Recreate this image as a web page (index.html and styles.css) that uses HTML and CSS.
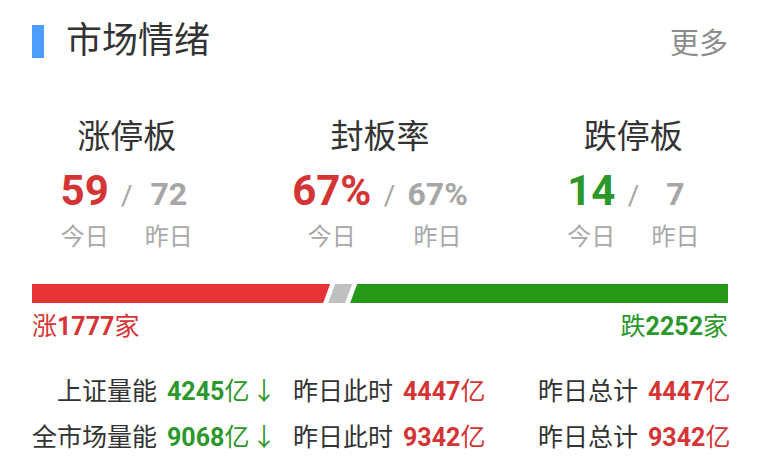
FILE: index.html
```html
<!DOCTYPE html>
<html lang="zh-CN">
<head>
    <meta charset="UTF-8">
    <meta name="viewport" content="width=device-width, initial-scale=1.0">
    <title>市场情绪</title>
    <link rel="stylesheet" href="styles.css">
</head>
<body>
    <div class="header">
        <div class="title"><span class="mark"></span>市场情绪</div>
        <a class="more">更多</a>
    </div>

    <div class="stats">
        <div class="stat">
            <div class="statName">涨停板</div>
            <div class="nums">
                <span class="today red">59</span>
                <span class="slash">/</span>
                <span class="yday">72</span>
                <span class="lbl">今日</span>
                <span></span>
                <span class="lbl">昨日</span>
            </div>
        </div>
        <div class="stat">
            <div class="statName">封板率</div>
            <div class="nums">
                <span class="today red">67%</span>
                <span class="slash">/</span>
                <span class="yday">67%</span>
                <span class="lbl">今日</span>
                <span></span>
                <span class="lbl">昨日</span>
            </div>
        </div>
        <div class="stat">
            <div class="statName">跌停板</div>
            <div class="nums">
                <span class="today green">14</span>
                <span class="slash">/</span>
                <span class="yday">7</span>
                <span class="lbl">今日</span>
                <span></span>
                <span class="lbl">昨日</span>
            </div>
        </div>
    </div>

    <div class="ratio">
        <div class="bar">
            <div class="up" style="flex: 1777"></div>
            <div class="flat"></div>
            <div class="down" style="flex: 2252"></div>
        </div>
        <div class="legend">
            <span class="red">涨<b>1777</b>家</span>
            <span class="green">跌<b>2252</b>家</span>
        </div>
    </div>

    <div class="volume">
        <span class="vLabel">上证量能</span>
        <span class="green"><b>4245</b>亿<i>↓</i></span>
        <span>昨日此时</span>
        <span class="red"><b>4447</b>亿</span>
        <span>昨日总计</span>
        <span class="red"><b>4447</b>亿</span>

        <span class="vLabel">全市场量能</span>
        <span class="green"><b>9068</b>亿<i>↓</i></span>
        <span>昨日此时</span>
        <span class="red"><b>9342</b>亿</span>
        <span>昨日总计</span>
        <span class="red"><b>9342</b>亿</span>
    </div>
</body>
</html>
```

FILE: styles.css
```css
body {
    margin: 0;
    width: 760px;
    font-family: Roboto, "Noto Sans CJK SC", sans-serif;
    color: #333;
    background-color: #fff;
}
.red {
    color: #d43434;
}
.green {
    color: #2c972a;
}

/* header */
.header {
    height: 82px;
    padding: 0 32px;
    display: flex;
    align-items: center;
    justify-content: space-between;
}
.title {
    display: flex;
    align-items: center;
    font-size: 36px;
    line-height: 40px;
}
.mark {
    width: 12px;
    height: 33px;
    margin-right: 22px;
    background-color: #4d9dff;
}
.more {
    font-size: 29px;
    color: #8c8c8c;
}

/* three stat columns */
.stats {
    margin-top: 35px;
    display: grid;
    grid-template-columns: 1fr 1fr 1fr;
}
.stat {
    display: flex;
    flex-direction: column;
    align-items: center;
}
.statName {
    font-size: 33px;
    line-height: 40px;
}
.nums {
    margin-top: 12px;
    display: grid;
    grid-template-columns: auto 36px auto;
    grid-template-rows: 44px 30px;
    justify-items: center;
    align-items: baseline;
    row-gap: 9px;
}
.today {
    font-size: 42px;
    font-weight: bold;
    line-height: 44px;
}
.yday {
    font-size: 32px;
    font-weight: bold;
    color: #a6a6a6;
}
.slash {
    font-size: 28px;
    color: #a6a6a6;
}
.lbl {
    font-size: 24px;
    line-height: 30px;
    color: #a8a8a8;
}

/* up / down ratio bar */
.ratio {
    margin: 32px 32px 0;
}
.bar {
    display: flex;
    height: 19px;
}
.up {
    background-color: #e63333;
    clip-path: polygon(0 0, 100% 0, calc(100% - 7px) 100%, 0 100%);
}
.flat {
    width: 24px;
    margin-left: -2px;
    background-color: #c0c0c0;
    clip-path: polygon(7px 0, 100% 0, calc(100% - 7px) 100%, 0 100%);
}
.down {
    margin-left: -2px;
    background-color: #279817;
    clip-path: polygon(7px 0, 100% 0, 100% 100%, 0 100%);
}
.legend {
    margin-top: 9px;
    display: flex;
    justify-content: space-between;
    font-size: 25px;
    line-height: 30px;
}
.legend b, .volume b {
    font-weight: bold;
}

/* volume table */
.volume {
    margin: 27px 32px 0;
    display: grid;
    grid-template-columns: 125px 116px 100px 125px 100px 1fr;
    column-gap: 10px;
    font-size: 25px;
    line-height: 46px;
    white-space: nowrap;
}
.vLabel {
    justify-self: end;
}
.volume i {
    font-style: normal;
    margin-left: 2px;
}
```
